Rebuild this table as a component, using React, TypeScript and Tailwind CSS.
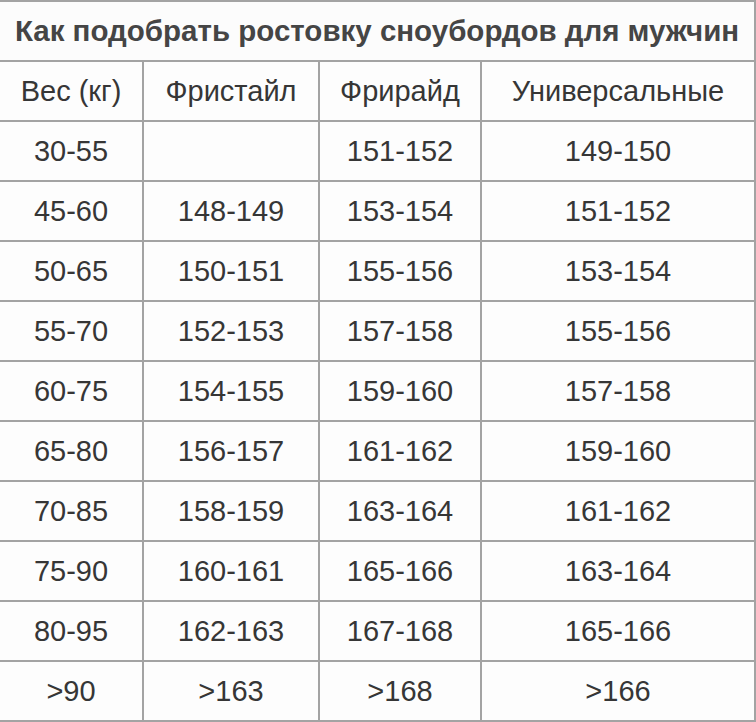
import React from "react";

const rows: [string, string, string, string][] = [
  ["30-55", "", "151-152", "149-150"],
  ["45-60", "148-149", "153-154", "151-152"],
  ["50-65", "150-151", "155-156", "153-154"],
  ["55-70", "152-153", "157-158", "155-156"],
  ["60-75", "154-155", "159-160", "157-158"],
  ["65-80", "156-157", "161-162", "159-160"],
  ["70-85", "158-159", "163-164", "161-162"],
  ["75-90", "160-161", "165-166", "163-164"],
  ["80-95", "162-163", "167-168", "165-166"],
  [">90", ">163", ">168", ">166"],
];

const header: [string, string, string, string] = ["Вес (кг)", "Фристайл", "Фрирайд", "Универсальные"];

function Row({ cells }: { cells: string[] }) {
  return (
    <div className="grid grid-cols-[144px_176px_162px_274px] h-[60px]">
      {cells.map((c, i) => (
        <div
          key={i}
          className="flex items-center justify-center border-r-2 border-b-2 border-[#a3a3a3] text-[29px] text-[#363636] leading-none"
        >
          {c}
        </div>
      ))}
    </div>
  );
}

export default function App() {
  return (
    <div
      className="w-[756px] h-[722px] bg-[#fdfdfd] overflow-hidden"
      style={{ fontFamily: '"Liberation Sans", Arial, sans-serif' }}
    >
      <div className="h-[62px] border-t-2 border-b-2 border-r-2 border-[#a3a3a3] bg-[#fcfcfc] flex items-center justify-center">
        <span className="text-[29.5px] font-bold text-[#454545] leading-none whitespace-nowrap">
          Как подобрать ростовку сноубордов для мужчин
        </span>
      </div>
      <Row cells={header} />
      {rows.map((r, i) => (
        <Row key={i} cells={r} />
      ))}
    </div>
  );
}
